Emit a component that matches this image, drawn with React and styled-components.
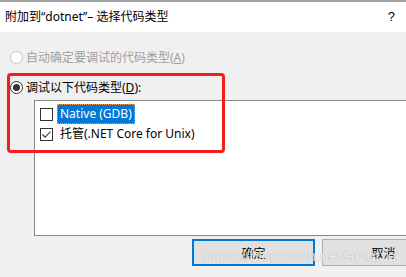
import React from 'react';
import styled, { createGlobalStyle } from 'styled-components';

const Global = createGlobalStyle`
  html, body {
    margin: 0;
    padding: 0;
    overflow: hidden;
    background: #f0f0f0;
  }
  body {
    font-family: "Noto Sans", "Noto Sans CJK SC", sans-serif;
    font-size: 12px;
    color: #000;
  }
`;

const Dialog = styled.div`
  position: relative;
  width: 406px;
  height: 277px;
  overflow: hidden;
  background: #f0f0f0;
`;

const TitleBar = styled.div`
  height: 30px;
  border-top: 2px solid #a3a3a3;
  background: #fff;
  display: flex;
  align-items: center;
  justify-content: space-between;
  padding: 0 11px 0 5px;
  font-size: 12px;
  line-height: 16px;
`;

const Help = styled.span`
  font-family: "Liberation Sans", sans-serif;
  font-size: 13px;
`;

const Body = styled.div`
  padding: 15px 0 0 10px;
`;

const RadioRow = styled.label`
  display: flex;
  align-items: center;
  height: 20px;
  gap: 3px;
  color: ${p => (p.disabled ? '#a0a0a0' : '#000')};
  margin-bottom: ${p => p.$gap || 0}px;
`;

const Radio = styled.span`
  box-sizing: border-box;
  width: 13px;
  height: 13px;
  border-radius: 50%;
  border: 1px solid ${p => (p.disabled ? '#c4c4c4' : '#333')};
  background: #fff;
  display: flex;
  align-items: center;
  justify-content: center;
  &::after {
    content: '';
    width: 7px;
    height: 7px;
    border-radius: 50%;
    background: #333;
    display: ${p => (p.checked ? 'block' : 'none')};
  }
`;

const Key = styled.span`
  text-decoration: underline;
  text-underline-offset: 1px;
`;

const List = styled.div`
  margin: 3px -30px 0 24px;
  height: 131px;
  border: 1px solid #828790;
  background: #fff;
  padding: 3px 0 0 5px;
`;

const Item = styled.div`
  display: flex;
  align-items: center;
  height: 20px;
  gap: 4px;
`;

const Box = styled.span`
  box-sizing: border-box;
  width: 13px;
  height: 13px;
  border: 1px solid #333;
  background: #fff;
  display: flex;
  align-items: center;
  justify-content: center;
`;

const ItemText = styled.span`
  padding: 1px 2px;
  line-height: 16px;
  background: ${p => (p.selected ? '#0078d7' : 'transparent')};
  color: ${p => (p.selected ? '#fff' : '#000')};
  border: 1px dotted ${p => (p.selected ? '#f2a04a' : 'transparent')};
`;

const Buttons = styled.div`
  display: flex;
  gap: 7px;
  margin: 3px 0 0 182px;
`;

const Button = styled.button`
  flex: none;
  box-sizing: border-box;
  width: 123px;
  height: 27px;
  background: #e1e1e1;
  border: ${p => (p.primary ? '2px solid #0078d7' : '1px solid #adadad')};
  font-family: inherit;
  font-size: 12px;
  color: #000;
  padding: 0;
`;

const Highlight = styled.div`
  position: absolute;
  left: 7px;
  top: 73px;
  width: 218px;
  height: 80px;
  box-sizing: border-box;
  border: 3px solid #f41c1c;
  border-radius: 4px;
  pointer-events: none;
`;

const Watermark = styled.div`
  position: absolute;
  left: 203px;
  top: 247px;
  font-family: "Liberation Sans", sans-serif;
  font-size: 15.5px;
  color: rgba(255, 255, 255, 0.8);
  text-shadow: 0 0 1px rgba(90, 90, 90, 0.5);
  pointer-events: none;
`;

const Check = () => (
  <svg width="11" height="11" viewBox="0 0 11 11">
    <path d="M1.5 5.5 L4.2 8.2 L9.5 2.5" fill="none" stroke="#333" strokeWidth="1.1" />
  </svg>
);

export default function App() {
  return (
    <>
      <Global />
      <Dialog>
        <TitleBar>
          <span>附加到“dotnet”– 选择代码类型</span>
          <Help>?</Help>
        </TitleBar>
        <Body>
          <RadioRow disabled $gap={10}>
            <Radio disabled />
            <span>自动确定要调试的代码类型(<Key>A</Key>)</span>
          </RadioRow>
          <RadioRow>
            <Radio checked />
            <span>调试以下代码类型(<Key>D</Key>):</span>
          </RadioRow>
          <List>
            <Item>
              <Box />
              <ItemText selected>Native (GDB)</ItemText>
            </Item>
            <Item>
              <Box><Check /></Box>
              <ItemText>托管(.NET Core for Unix)</ItemText>
            </Item>
          </List>
          <Buttons>
            <Button primary>确定</Button>
            <Button>取消</Button>
          </Buttons>
        </Body>
        <Highlight />
        <Watermark>https://blog.csdn.net/atzqtzq</Watermark>
      </Dialog>
    </>
  );
}
